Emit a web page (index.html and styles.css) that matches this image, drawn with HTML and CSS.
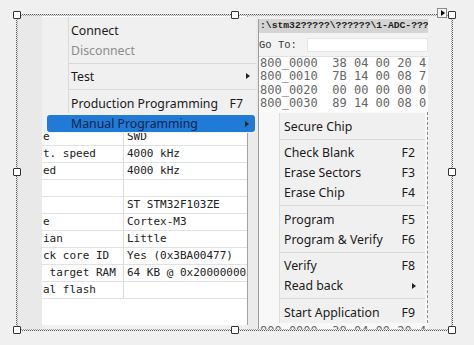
FILE: index.html
```html
<!DOCTYPE html>
<html>
<head>
<meta charset="utf-8">
<link rel="stylesheet" href="styles.css">
</head>
<body>
<div class="stage">
  <div class="frame">
    <div class="window">
      <div class="side"></div>
      <div class="info">
        <div class="row"><span class="k">e</span><span class="v">SWD</span></div>
        <div class="row"><span class="k">t. speed</span><span class="v">4000 kHz</span></div>
        <div class="row"><span class="k">ed</span><span class="v">4000 kHz</span></div>
        <div class="row"><span class="k"></span><span class="v"></span></div>
        <div class="row"><span class="k"></span><span class="v">ST STM32F103ZE</span></div>
        <div class="row"><span class="k">e</span><span class="v">Cortex-M3</span></div>
        <div class="row"><span class="k">ian</span><span class="v">Little</span></div>
        <div class="row"><span class="k">ck core ID</span><span class="v">Yes (0x3BA00477)</span></div>
        <div class="row"><span class="k"> target RAM</span><span class="v">64 KB @ 0x20000000</span></div>
        <div class="row last"><span class="k">al flash</span><span class="v"></span></div>
      </div>
      <div class="gap"></div>
      <div class="hex">
        <div class="hex-title">:\stm32?????\??????\1-ADC-???</div>
        <div class="goto"><span class="goto-label">Go To:</span><span class="goto-input"></span></div>
        <div class="hex-rows">
          <div class="hex-line">800_0000  38 04 00 20 4</div>
          <div class="hex-line">800_0010  7B 14 00 08 7</div>
          <div class="hex-line">800_0020  00 00 00 00 0</div>
          <div class="hex-line">800_0030  89 14 00 08 0</div>
        </div>
        <div class="hex-rest"></div>
        <div class="hex-tail"><div class="hex-line">800_0000  38 04 00 20 4</div></div>
      </div>
      <div class="side-r"></div>
    </div>
  </div>

  <div class="handle h-tl"></div>
  <div class="handle h-tm"></div>
  <div class="handle h-tr"></div>
  <div class="handle h-ml"></div>
  <div class="handle h-mr"></div>
  <div class="handle h-bl"></div>
  <div class="handle h-bm"></div>
  <div class="handle h-br"></div>
  <div class="play"></div>

  <div class="menu">
    <div class="menu-body">
      <div class="mi"><span>Connect</span></div>
      <div class="mi disabled"><span>Disconnect</span></div>
      <div class="sep"></div>
      <div class="mi arrow-item"><span>Test</span><span class="arrow"></span></div>
      <div class="sep sep7"></div>
      <div class="mi key-item"><span>Production Programming</span><span>F7</span></div>
    </div>
    <div class="mi mi-hl"><span>Manual Programming</span><span class="arrow"></span></div>
  </div>

  <div class="submenu">
    <div class="si"><span>Secure Chip</span></div>
    <div class="sep"></div>
    <div class="si"><span>Check Blank</span><span>F2</span></div>
    <div class="si"><span>Erase Sectors</span><span>F3</span></div>
    <div class="si"><span>Erase Chip</span><span>F4</span></div>
    <div class="sep"></div>
    <div class="si"><span>Program</span><span>F5</span></div>
    <div class="si"><span>Program &amp; Verify</span><span>F6</span></div>
    <div class="sep"></div>
    <div class="si"><span>Verify</span><span>F8</span></div>
    <div class="si si-arrow"><span>Read back</span><span class="arrow"></span></div>
    <div class="sep"></div>
    <div class="si"><span>Start Application</span><span>F9</span></div>
  </div>
</div>
</body>
</html>
```

FILE: styles.css
```css
* { box-sizing: border-box; margin: 0; padding: 0; }
html, body { width: 474px; height: 345px; overflow: hidden; }
body { background: #f0f0f0; font-family: "Noto Sans", sans-serif; }

.stage { position: relative; width: 474px; height: 345px; padding: 14px 0 0 16px; }

.frame {
  position: relative;
  width: 437px;
  height: 317px;
  border: 1px dotted #555;
  padding: 1px;
}
.frame::before {
  content: "";
  position: absolute;
  inset: 0;
  border: 1px dotted #a0a0a0;
  pointer-events: none;
  z-index: 1;
}
.window { display: flex; height: 100%; }

.side { width: 24px; background: #e9e9e9; }

.info {
  width: 206px;
  background: #fff;
  border-right: 1px solid #a3a3a3;
  padding-top: 112px;
  margin-bottom: 4px;
  font: 11px/16px "DejaVu Sans Mono", monospace;
  color: #222;
}
.row {
  display: grid;
  grid-template-columns: 82px 1fr;
  height: 17px;
  border-top: 1px solid #e2e2e2;
}
.row.last { border-bottom: 1px solid #e2e2e2; height: 18px; }
.k {
  border-right: 1px solid #dcdcdc;
  padding-left: 1px;
  white-space: pre;
  overflow: hidden;
}
.v { padding-left: 3px; white-space: pre; overflow: hidden; }

.gap { width: 10px; background: #ebebeb; }

.hex {
  width: 170px;
  margin-top: 3px;
  display: flex;
  flex-direction: column;
  border-left: 1px solid #9c9c9c;
  background: #fff;
  overflow: hidden;
}
.hex-title {
  height: 14px;
  background: #d4d4d4;
  font: bold 9.7px/14px "Liberation Mono", monospace;
  color: #222;
  white-space: nowrap;
  overflow: hidden;
  padding-left: 1px;
}
.goto {
  height: 24px;
  display: flex;
  align-items: center;
  background: #f3f3f3;
  border-bottom: 1px solid #e2e2e2;
  font: 10.5px "Liberation Mono", monospace;
  color: #333;
}
.goto-input {
  margin-left: auto;
  width: 121px;
  height: 14px;
  background: #fff;
  border: 1px solid #e4e4e4;
}
.hex-rows, .hex-tail {
  font: 12px/13.33px "DejaVu Sans Mono", monospace;
  color: #666;
  padding-left: 1px;
}
.hex-rows { padding-bottom: 2px; }
.hex-line { white-space: pre; height: 13.33px; }
.hex-rest { flex: 1; background: #f8f8f8; border-right: 1px dashed #8a8a8a; }
.hex-tail { height: 6px; overflow: hidden; background: #f8f8f8; flex: none; }
.hex-tail .hex-line { margin-top: 2px; }

.side-r { flex: 1; }

.handle {
  position: absolute;
  width: 8px;
  height: 8px;
  border: 1px solid #333;
  background: #fff;
  border-radius: 1px;
  z-index: 3;
}
.h-tl { left: 13px; top: 11px; }
.h-tm { left: 231px; top: 11px; }
.h-tr { left: 448px; top: 11px; }
.h-ml { left: 13px; top: 168px; }
.h-mr { left: 448px; top: 168px; }
.h-bl { left: 13px; top: 326px; }
.h-bm { left: 231px; top: 326px; }
.h-br { left: 448px; top: 326px; }

.play {
  position: absolute;
  left: 437px;
  top: 8px;
  width: 10px;
  height: 10px;
  border: 1px solid #8a8a8a;
  background: #f4f4f4;
  display: flex;
  align-items: center;
  justify-content: center;
  z-index: 3;
}
.play::after {
  content: "";
  border-left: 4px solid #000;
  border-top: 3px solid transparent;
  border-bottom: 3px solid transparent;
  margin-left: 1px;
}

.arrow {
  width: 0;
  height: 0;
  border-left: 4px solid #222;
  border-top: 3.5px solid transparent;
  border-bottom: 3.5px solid transparent;
}

.menu {
  position: absolute;
  left: 42px;
  top: 17px;
  width: 214px;
  height: 116px;
  background: #f0f0f0;
  font-size: 12.3px;
  color: #1a1a1a;
  z-index: 2;
}
.menu-body {
  margin-left: 26px;
  border-left: 1px solid #dadada;
  padding-top: 3px;
  height: 96px;
}
.mi {
  height: 20px;
  display: flex;
  align-items: center;
  justify-content: space-between;
  padding-left: 2px;
  padding-right: 13px;
}
.mi.disabled { color: #8c8c8c; }
.mi.arrow-item { padding-right: 6px; }
.mi-hl {
  margin: 2px 1px 0 5px;
  height: 17px;
  border-radius: 3px;
  background: #1f7bd6;
  color: #12234c;
  padding-left: 24px;
  padding-right: 6px;
}
.sep { height: 6px; display: flex; align-items: center; }
.sep::after { content: ""; flex: 1; height: 1px; background: #d9d9d9; }
.sep7 { height: 7px; }

.submenu {
  position: absolute;
  left: 279px;
  top: 113px;
  width: 146px;
  height: 210px;
  background: #f0f0f0;
  border-left: 1px solid #dedede;
  padding-top: 3px;
  font-size: 12.3px;
  color: #1a1a1a;
  z-index: 2;
}
.submenu .sep { height: 6.5px; }
.si {
  height: 20px;
  display: flex;
  align-items: center;
  justify-content: space-between;
  padding-left: 4px;
  padding-right: 10px;
}
.si-arrow { padding-right: 9px; }
```
